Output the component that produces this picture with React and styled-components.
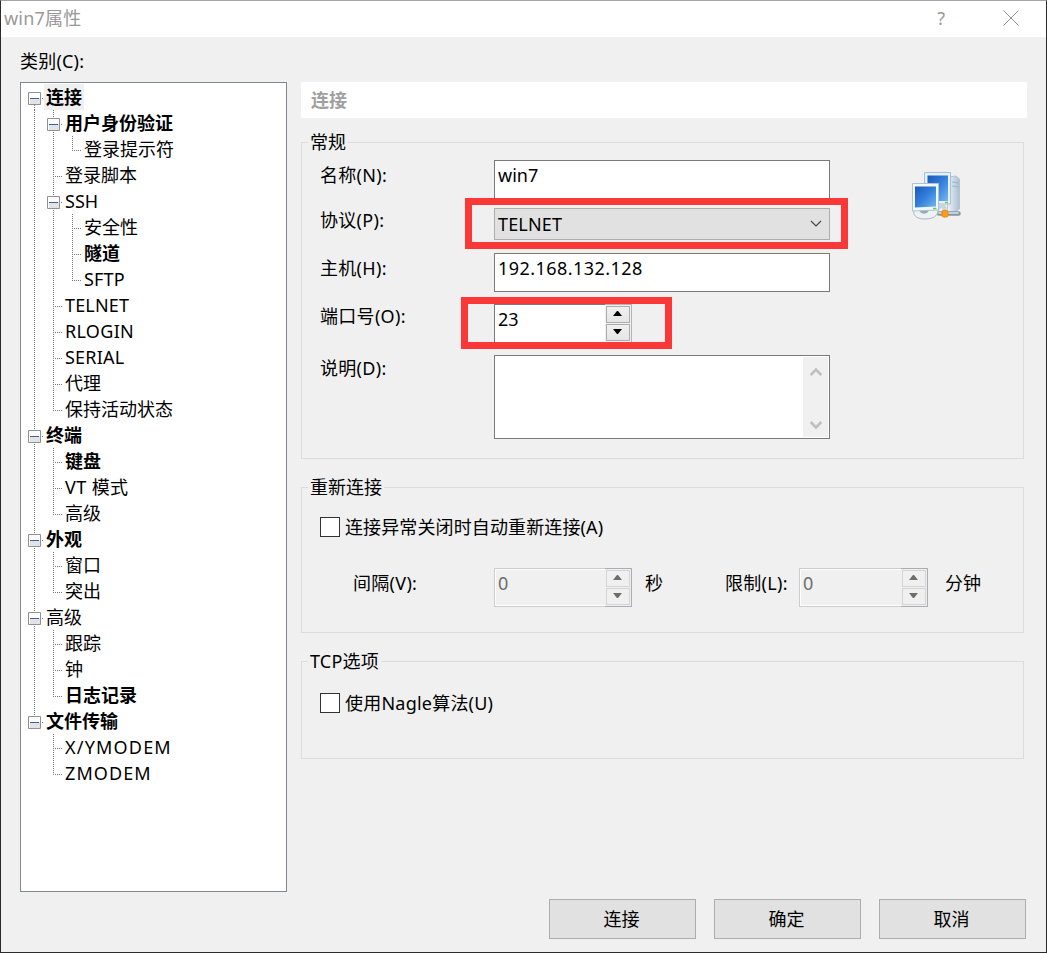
import React from "react";
import styled, { createGlobalStyle } from "styled-components";

const tree = [
  { text: "连接", bold: true, selected: true, cells: ["root"] },
  { text: "用户身份验证", bold: true, cells: ["line", "box"] },
  { text: "登录提示符", cells: ["line", "line", "end"] },
  { text: "登录脚本", cells: ["line", "tee"] },
  { text: "SSH", cells: ["line", "box"] },
  { text: "安全性", cells: ["line", "line", "tee"] },
  { text: "隧道", bold: true, cells: ["line", "line", "tee"] },
  { text: "SFTP", spacing: 0.2, cells: ["line", "line", "end"] },
  { text: "TELNET", spacing: 0.15, cells: ["line", "tee"] },
  { text: "RLOGIN", spacing: 0.3, cells: ["line", "tee"] },
  { text: "SERIAL", spacing: 0.2, cells: ["line", "tee"] },
  { text: "代理", cells: ["line", "tee"] },
  { text: "保持活动状态", cells: ["line", "end"] },
  { text: "终端", bold: true, cells: ["box"] },
  { text: "键盘", bold: true, cells: ["line", "tee"] },
  { text: "VT 模式", spacing: 0.4, cells: ["line", "tee"] },
  { text: "高级", cells: ["line", "end"] },
  { text: "外观", bold: true, cells: ["box"] },
  { text: "窗口", cells: ["line", "tee"] },
  { text: "突出", cells: ["line", "end"] },
  { text: "高级", cells: ["box"] },
  { text: "跟踪", cells: ["line", "tee"] },
  { text: "钟", cells: ["line", "tee"] },
  { text: "日志记录", bold: true, cells: ["line", "end"] },
  { text: "文件传输", bold: true, cells: ["lastBox"] },
  { text: "X/YMODEM", spacing: 1.2, cells: ["blank", "tee"] },
  { text: "ZMODEM", spacing: 1.1, cells: ["blank", "end"] },
];

const verticals = {
  root: [21, 26],
  box: [0, 26],
  lastBox: [0, 14],
  line: [0, 26],
  tee: [0, 26],
  end: [0, 15],
};

function TreeCell({ kind }) {
  const v = verticals[kind];
  const hasBox = kind === "root" || kind === "box" || kind === "lastBox";
  const hasArm = kind === "tee" || kind === "end";

  return (
    <Cell viewBox="0 0 19 26">
      {v && (
        <path d={`M9.5 ${v[0]}V${v[1]}`} stroke="#7a7a7a" strokeDasharray="1 1" />
      )}
      {hasArm && (
        <path d="M9 14.5H19" stroke="#7a7a7a" strokeDasharray="1 1" />
      )}
      {hasBox && (
        <>
          <rect x="3" y="8" width="13" height="13" rx="1" fill="#919191" />
          <rect x="4" y="9" width="11" height="11" fill="#fff" />
          <rect x="5" y="14" width="10" height="6" fill="#e3e3e3" />
          <path d="M5 14.5H14" stroke="#3c5fa8" />
          <path d="M17 14.5H18" stroke="#7a7a7a" />
        </>
      )}
    </Cell>
  );
}

function Spin({ disabled }) {
  const color = disabled ? "#6d6d6d" : "#000";
  return (
    <SpinBox $disabled={disabled}>
      <SpinButton $disabled={disabled}>
        <svg width="9" height="5" viewBox="0 0 9 5">
          <path d="M0 5L4 0H5L9 5Z" fill={color} />
        </svg>
      </SpinButton>
      <SpinButton $disabled={disabled}>
        <svg width="9" height="5" viewBox="0 0 9 5">
          <path d="M0 0L4 5H5L9 0Z" fill={color} />
        </svg>
      </SpinButton>
    </SpinBox>
  );
}

function NetworkIcon() {
  return (
    <svg width="52" height="52" viewBox="0 0 52 52">
      <defs>
        <linearGradient id="screen" x1="0" y1="0" x2="1" y2="1">
          <stop offset="0" stopColor="#1c58b8" />
          <stop offset="0.5" stopColor="#3480dc" />
          <stop offset="1" stopColor="#74b8f0" />
        </linearGradient>
        <linearGradient id="tower" x1="0" y1="0" x2="1" y2="0">
          <stop offset="0" stopColor="#f2f6fa" />
          <stop offset="1" stopColor="#a9bed2" />
        </linearGradient>
      </defs>
      <path d="M39 7L46 6L49.500 9V39L42 44L37 43Z" fill="url(#tower)" stroke="#b2c4d4" />
      <path d="M42 12L49 13M42 16L49 17" stroke="#9db4ca" />
      <path d="M14.500 2.500L40.500 2.500V34H14.500Z" fill="#e6f0f8" stroke="#a9bfd2" />
      <path d="M17.500 5.500H38V31H17.500Z" fill="url(#screen)" />
      <path d="M29 43.500H48.500" stroke="#8195a6" strokeWidth="4.500" strokeLinecap="round" />
      <path d="M29 43H48" stroke="#c5d2dd" strokeWidth="1.800" strokeLinecap="round" />
      <path d="M5 38C1 45 7 49 14 49C22 49 29 47 28 38Z" fill="#eef2f6" stroke="#a9b7c3" />
      <path d="M10 38C7 45 20 46 19 38Z" fill="#98a9b8" />
      <path d="M28 38C33 33 35 36 34 43" fill="none" stroke="#c8d6e2" strokeWidth="4" />
      <path d="M2.500 13.500H28.500V40L2.500 41Z" fill="#f2f8fc" stroke="#adc2d3" />
      <path d="M5 16.500H26V36.500L5 37.500Z" fill="url(#screen)" />
      <path d="M23 38.500H26.500M35 32.500H38" stroke="#6fcf3a" strokeWidth="1.300" />
      <rect x="32" y="40.500" width="6" height="6.500" rx="1.500" fill="#ff9c10" stroke="#e58a10" />
    </svg>
  );
}

export default function App() {
  return (
    <Dialog>
      <GlobalStyle />
      <TitleBar>
        <Title>win7属性</Title>
        <Help>?</Help>
        <Close viewBox="0 0 16 16">
          <path d="M0.500 0.500L15.500 15.500M15.500 0.500L0.500 15.500" stroke="#8f8f8f" />
        </Close>
      </TitleBar>

      <Body>
        <Sidebar>
          <Category>类别(C):</Category>
          <Tree>
            {tree.map((node, i) => (
              <TreeRow key={i}>
                {node.cells.map((kind, j) => (
                  <TreeCell key={j} kind={kind} />
                ))}
                <NodeText
                  $bold={node.bold}
                  $selected={node.selected}
                  $spacing={node.spacing}
                >
                  {node.text}
                </NodeText>
              </TreeRow>
            ))}
          </Tree>
        </Sidebar>

        <Content>
          <PageTitle>连接</PageTitle>

          <Group $top={24} $height={317}>
            <Legend>常规</Legend>
            <Fields>
              <Field $height={39}>
                <Label>名称(N):</Label>
                <Input>win7</Input>
              </Field>
              <Field $height={32} $gap={9}>
                <Label $top={-3}>协议(P):</Label>
                <Select>
                  TELNET
                  <svg width="12" height="8" viewBox="0 0 12 8">
                    <path d="M1 1L6 6L11 1" fill="none" stroke="#444" strokeWidth="1.200" />
                  </svg>
                </Select>
                <Highlight $left={145} $top={-10} $width={383} $height={51} />
              </Field>
              <Field $height={39} $gap={13}>
                <Label>主机(H):</Label>
                <Input $spacing={0.45}>192.168.132.128</Input>
              </Field>
              <Field $height={39} $gap={12}>
                <Label $top={-3}>端口号(O):</Label>
                <NumberInput $width={138}>
                  <Value>23</Value>
                  <Spin />
                </NumberInput>
                <Highlight $left={141} $top={-7} $width={211} $height={52} />
              </Field>
              <Field $height={84} $gap={12}>
                <Label $top={-2}>说明(D):</Label>
                <TextArea>
                  <ScrollBar>
                    <svg width="12" height="9" viewBox="0 0 12 9">
                      <path d="M0.700 8L6 2.500L11.300 8" fill="none" stroke="#bfbfbf" strokeWidth="2.600" />
                    </svg>
                    <svg width="12" height="9" viewBox="0 0 12 9">
                      <path d="M0.700 1L6 6.500L11.300 1" fill="none" stroke="#bfbfbf" strokeWidth="2.600" />
                    </svg>
                  </ScrollBar>
                </TextArea>
              </Field>
            </Fields>
            <IconSlot>
              <NetworkIcon />
            </IconSlot>
          </Group>

          <Group $top={28} $height={146}>
            <Legend>重新连接</Legend>
            <Options $top={26}>
              <CheckRow $spacing={0.12}>
                <CheckBox />
                连接异常关闭时自动重新连接(A)
              </CheckRow>
              <Limits>
                <LimitLabel $width={141}>间隔(V):</LimitLabel>
                <NumberInput $width={138} $disabled>
                  <Value>0</Value>
                  <Spin disabled />
                </NumberInput>
                <Unit $left={13} $width={80}>秒</Unit>
                <LimitLabel $width={74}>限制(L):</LimitLabel>
                <NumberInput $width={129} $disabled>
                  <Value>0</Value>
                  <Spin disabled />
                </NumberInput>
                <Unit $left={17} $width={40}>分钟</Unit>
              </Limits>
            </Options>
          </Group>

          <Group $top={28} $height={98}>
            <Legend $spacing={0.2}>TCP选项</Legend>
            <Options $top={28}>
              <CheckRow $spacing={0.22}>
                <CheckBox />
                使用Nagle算法(U)
              </CheckRow>
            </Options>
          </Group>

          <Footer>
            <Button>连接</Button>
            <Button>确定</Button>
            <Button>取消</Button>
          </Footer>
        </Content>
      </Body>
    </Dialog>
  );
}

const GlobalStyle = createGlobalStyle`
  * {
    box-sizing: border-box;
  }

  body {
    margin: 0;
    font-family: "Noto Sans", "Noto Sans CJK SC", sans-serif;
    font-size: 18px;
    line-height: 26px;
    color: #000;
  }

  svg {
    display: block;
    flex-shrink: 0;
  }
`;

const Dialog = styled.div`
  display: flex;
  flex-direction: column;
  width: 1047px;
  height: 953px;
  overflow: hidden;
  background: #f0f0f0;
  border: 1px solid #2b2b2b;
  border-top-color: #a5a5a5;
`;

const TitleBar = styled.header`
  display: flex;
  align-items: center;
  height: 36px;
  padding: 0 27px 2px 3px;
  background: #fff;
  color: #999;
`;

const Title = styled.div`
  flex: 1;
  letter-spacing: 0.2px;
`;

const Help = styled.div`
  margin-right: 58px;
`;

const Close = styled.svg`
  width: 16px;
  height: 16px;
`;

const Body = styled.div`
  display: flex;
  flex: 1;
  padding: 0 19px;
`;

const Sidebar = styled.div`
  width: 267px;
  margin-right: 14px;
`;

const Category = styled.div`
  padding: 11px 0 8px;
  letter-spacing: 0.2px;
`;

const Tree = styled.div`
  height: 810px;
  padding: 1px 4px;
  background: #fff;
  border: 1px solid #828790;
`;

const TreeRow = styled.div`
  display: flex;
  height: 26px;
`;

const Cell = styled.svg`
  width: 19px;
  height: 26px;
`;

const NodeText = styled.span`
  padding: 0 2px;
  white-space: pre;
  font-weight: ${(p) => (p.$bold ? 700 : 400)};
  letter-spacing: ${(p) => p.$spacing || 0}px;
  background: ${(p) => (p.$selected ? "#f0f0f0" : "none")};
`;

const Content = styled.main`
  display: flex;
  flex-direction: column;
  flex: 1;
  padding-top: 45px;
`;

const PageTitle = styled.div`
  height: 36px;
  padding: 5px 10px;
  background: #fff;
  color: #a0a0a0;
  font-weight: 700;
`;

const Group = styled.section`
  display: flex;
  flex-wrap: wrap;
  align-content: flex-start;
  width: 723px;
  height: ${(p) => p.$height}px;
  margin-top: ${(p) => p.$top}px;
  border: 1px solid #dcdcdc;
`;

const Legend = styled.div`
  width: max-content;
  height: 26px;
  margin: -14px 600px -12px 6px;
  padding: 0 2px;
  background: #f0f0f0;
  white-space: nowrap;
  letter-spacing: ${(p) => p.$spacing || 0}px;
`;

const Fields = styled.div`
  width: 528px;
  padding: 17px 0 0 18px;
`;

const Field = styled.div`
  position: relative;
  display: flex;
  height: ${(p) => p.$height}px;
  margin-top: ${(p) => p.$gap || 0}px;
`;

const Label = styled.label`
  width: 174px;
  margin-top: ${(p) => 2 + (p.$top || 0)}px;
  letter-spacing: 0.3px;
`;

const Input = styled.div`
  width: 336px;
  padding: 1px 3px;
  background: #fff;
  border: 1px solid #7a7a7a;
  letter-spacing: ${(p) => p.$spacing || 0}px;
`;

const Select = styled.div`
  display: flex;
  align-items: center;
  justify-content: space-between;
  width: 336px;
  padding: 0 7px 0 3px;
  background: #e1e1e1;
  border: 1px solid #adadad;
  letter-spacing: 0.15px;
`;

// red marker frames lie over the fields
const Highlight = styled.div`
  position: absolute;
  z-index: 1;
  left: ${(p) => p.$left}px;
  top: ${(p) => p.$top}px;
  width: ${(p) => p.$width}px;
  height: ${(p) => p.$height}px;
  border: 7px solid #fb3838;
`;

const NumberInput = styled.div`
  display: flex;
  width: ${(p) => p.$width}px;
  height: 39px;
  background: ${(p) => (p.$disabled ? "#f0f0f0" : "#fff")};
  border: 1px solid ${(p) => (p.$disabled ? "#cccccc" : "#7a7a7a")};
  border-right: 0;
  box-shadow: ${(p) => (p.$disabled ? "inset 0 0 0 1px #fff" : "none")};
  color: ${(p) => (p.$disabled ? "#6d6d6d" : "#000")};
`;

const Value = styled.div`
  flex: 1;
  padding: 1px 3px;
`;

const SpinBox = styled.div`
  display: flex;
  flex-direction: column;
  gap: 1px;
  width: 27px;
  margin: -1px 0;
  padding: 1px;
  background: #f0f0f0;
  border: 1px solid ${(p) => (p.$disabled ? "#abadb3" : "#b4b4b4")};
  border-left: 0;
`;

const SpinButton = styled.div`
  display: flex;
  flex: 1;
  align-items: center;
  justify-content: center;
  width: 24px;
  padding: 0 1px 2px 0;
  background: ${(p) => (p.$disabled ? "#f0f0f0" : "linear-gradient(#f0f0f0, #e5e5e5)")};
  border: 1px solid ${(p) => (p.$disabled ? "#d4d4d4" : "#acacac")};
`;

const TextArea = styled.div`
  display: flex;
  justify-content: flex-end;
  width: 336px;
  padding: 1px;
  background: #fff;
  border: 1px solid #7a7a7a;
`;

const ScrollBar = styled.div`
  display: flex;
  flex-direction: column;
  align-items: center;
  justify-content: space-between;
  width: 25px;
  padding: 10px 0 7px;
  background: #f0f0f0;
`;

const IconSlot = styled.div`
  padding: 27px 0 0 80px;
`;

const Options = styled.div`
  width: 100%;
  padding: ${(p) => p.$top}px 0 0 18px;
`;

const CheckRow = styled.label`
  display: flex;
  align-items: center;
  height: 26px;
  letter-spacing: ${(p) => p.$spacing}px;
`;

const CheckBox = styled.span`
  width: 20px;
  height: 20px;
  margin-right: 5px;
  background: #fff;
  border: 1px solid #333;
`;

const Limits = styled.div`
  display: flex;
  padding: 28px 0 0 33px;
`;

const LimitLabel = styled.label`
  width: ${(p) => p.$width}px;
  padding-top: 2px;
  letter-spacing: 0.3px;
`;

const Unit = styled.span`
  width: ${(p) => p.$width}px;
  margin-left: ${(p) => p.$left}px;
  padding-top: 2px;
`;

const Footer = styled.footer`
  display: flex;
  justify-content: flex-end;
  gap: 18px;
  margin-top: auto;
  padding: 0 1px 13px 0;
`;

const Button = styled.div`
  display: flex;
  align-items: center;
  justify-content: center;
  width: 147px;
  height: 40px;
  padding-right: 2px;
  background: #e1e1e1;
  border: 1px solid #adadad;
`;
